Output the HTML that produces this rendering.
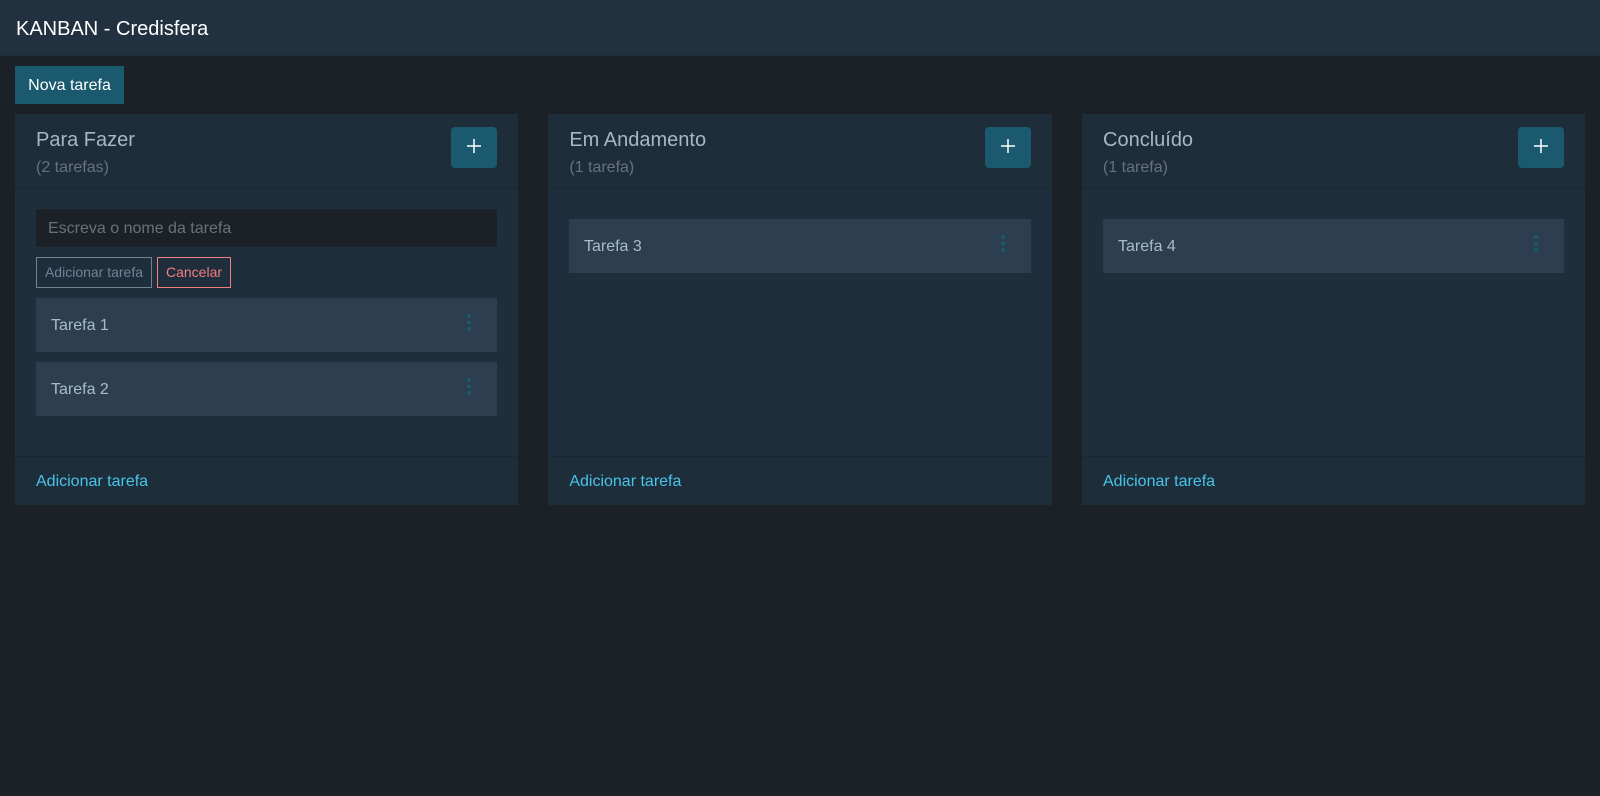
<!DOCTYPE html>
<html lang="pt">
<head>
<meta charset="utf-8">
<title>KANBAN - Credisfera</title>
<style>
*{box-sizing:border-box;margin:0;padding:0}
html,body{width:1600px;height:796px;overflow:hidden;background:#1c2128;font-family:"Liberation Sans",sans-serif}
.a{position:absolute;white-space:nowrap}
.top{left:0;top:0;width:1600px;height:56px;background:#213140;color:#fff;font-size:20px;line-height:58px;padding-left:16px;border-bottom:1px solid #1f2c39}
.new{left:15px;top:66px;width:109px;height:38px;background:#1b5a6e;color:#fff;font-size:16px;line-height:40px;text-align:center}
.col{top:114px;height:391px;background:#1f2e3d}
.head{left:0;top:0;right:0;height:75px;background:#1e2d3a;border-bottom:1px solid #1a2733}
.foot{left:0;top:342px;right:0;height:49px;background:#1e2d3a;border-top:1px solid #1a2733}
.title{left:21px;top:14px;font-size:20px;line-height:24px;color:#a6b8c3}
.sub{left:21px;top:44px;font-size:16px;line-height:20px;color:#66727c}
.plus{top:13px;right:21px;width:46px;height:41px;border-radius:4px;background:#1b5a6e}
.plus svg{position:absolute;left:15px;top:11px}
.link{left:21px;top:358px;font-size:16px;line-height:20px;color:#48c4e9}
.card{height:54px;background:#2c3e50;color:#a8bcc8;font-size:16px;line-height:56px;padding-left:15px}
.dots{position:absolute;width:4px;height:4px;border-radius:50%;background:#1b5a6e;box-shadow:0 6.4px 0 #1b5a6e,0 12.8px 0 #1b5a6e}
.input{left:21px;top:95px;height:38px;background:#1c2128;color:#6a7279;font-size:16px;line-height:39px;padding-left:12px}
.btn{top:143px;height:31px;font-size:14px;line-height:29px;text-align:center}
</style>
</head>
<body>
<div class="a top">KANBAN - Credisfera</div>
<div class="a new">Nova tarefa</div>

<div class="a col" style="left:15px;width:503px">
  <div class="a head"></div>
  <div class="a title">Para Fazer</div>
  <div class="a sub">(2 tarefas)</div>
  <div class="a plus"><svg width="16" height="16" viewBox="0 0 16 16"><path d="M8 1V15M1 8H15" stroke="#fff" stroke-width="1.5" fill="none"/></svg></div>
  <div class="a input" style="width:461px">Escreva o nome da tarefa</div>
  <div class="a btn" style="left:21px;width:116px;border:1px solid #6f8494;color:#6f8494">Adicionar tarefa</div>
  <div class="a btn" style="left:142px;width:74px;border:1px solid #f27c7f;color:#f27c7f">Cancelar</div>
  <div class="a card" style="left:21px;top:184px;width:461px">Tarefa 1<span class="dots" style="left:431px;top:15.6px"></span></div>
  <div class="a card" style="left:21px;top:248px;width:461px">Tarefa 2<span class="dots" style="left:431px;top:15.6px"></span></div>
  <div class="a foot"></div>
  <div class="a link">Adicionar tarefa</div>
</div>

<div class="a col" style="left:548.33px;width:503.33px">
  <div class="a head"></div>
  <div class="a title">Em Andamento</div>
  <div class="a sub">(1 tarefa)</div>
  <div class="a plus"><svg width="16" height="16" viewBox="0 0 16 16"><path d="M8 1V15M1 8H15" stroke="#fff" stroke-width="1.5" fill="none"/></svg></div>
  <div class="a card" style="left:20.67px;top:105px;width:462px">Tarefa 3<span class="dots" style="left:432px;top:15.6px"></span></div>
  <div class="a foot"></div>
  <div class="a link">Adicionar tarefa</div>
</div>

<div class="a col" style="left:1082px;width:503px">
  <div class="a head"></div>
  <div class="a title">Concluído</div>
  <div class="a sub">(1 tarefa)</div>
  <div class="a plus"><svg width="16" height="16" viewBox="0 0 16 16"><path d="M8 1V15M1 8H15" stroke="#fff" stroke-width="1.5" fill="none"/></svg></div>
  <div class="a card" style="left:21px;top:105px;width:461px">Tarefa 4<span class="dots" style="left:431px;top:15.6px"></span></div>
  <div class="a foot"></div>
  <div class="a link">Adicionar tarefa</div>
</div>
</body>
</html>
